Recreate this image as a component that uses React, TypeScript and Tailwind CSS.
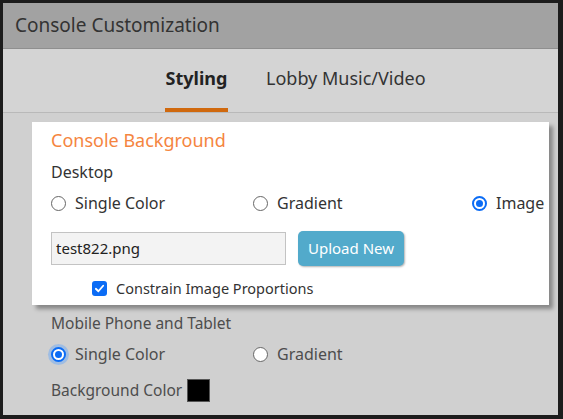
import React from 'react';

const font = { fontFamily: '"Segoe UI", "Noto Sans", Lato, sans-serif' };

function Radio({ checked, halo }: { checked?: boolean; halo?: boolean }) {
  if (checked) {
    return (
      <span
        className={`flex h-[15px] w-[15px] items-center justify-center rounded-full border-2 border-[#0b6cf5] bg-white ${halo ? 'ring-[3px] ring-[#7fb0f0]/60' : ''}`}
      >
        <span className="h-[7px] w-[7px] rounded-full bg-[#0b6cf5]" />
      </span>
    );
  }
  return <span className="h-[15px] w-[15px] rounded-full border border-[#666] bg-white" />;
}

function Option({ label, checked, halo, className = '' }: { label: string; checked?: boolean; halo?: boolean; className?: string }) {
  return (
    <div className={`flex items-center gap-[9px] ${className}`}>
      <Radio checked={checked} halo={halo} />
      <span>{label}</span>
    </div>
  );
}

export default function App() {
  return (
    <div
      className="flex h-[419px] w-[563px] flex-col bg-[#1c1c1c] pb-[4px] pl-[3px] pr-[5px] pt-[3px]"
      style={font}
    >
      <div className="flex h-full flex-col bg-[#d0d0d0]">
        {/* Header */}
        <div className="flex h-[46px] items-center border-b border-[#8f8f8f] bg-[#a2a2a2] pl-[12px] text-[19px] text-[#333]">
          Console Customization
        </div>

        {/* Tabs */}
        <div className="flex h-[64px] items-end border-b border-[#b9b9b9] bg-[#d4d4d4] pl-[162px]">
          <div className="flex flex-col items-center">
            <span className="pb-[16px] text-[18px] font-bold text-[#222]">Styling</span>
            <span className="h-[4px] w-[63px] bg-[#d0690e]" />
          </div>
          <div className="ml-[38px] flex flex-col">
            <span className="pb-[20px] text-[18px] text-[#333]">Lobby Music/Video</span>
          </div>
        </div>

        {/* Content */}
        <div className="flex flex-1 flex-col">
          <div className="ml-[29px] mt-[9px] h-[183px] w-[517px] bg-white pl-[19px] pt-[6px] shadow-[4px_4px_4px_rgba(0,0,0,0.35)]">
            <div className="h-[24px] text-[18px] leading-[24px] text-[#f5853f]">Console Background</div>
            <div className="mt-[9px] h-[22px] text-[16px] leading-[22px] text-[#333]">Desktop</div>
            <div className="mt-[9px] flex h-[22px] items-center text-[16px] text-[#333]">
              <Option label="Single Color" className="w-[202px]" />
              <Option label="Gradient" className="w-[219px]" />
              <Option label="Image" checked />
            </div>
            <div className="mt-[17px] flex items-center">
              <div className="flex h-[33px] w-[235px] items-center border border-[#c3c3c3] bg-[#f3f3f3] pl-[4px] text-[15px] text-[#222]">
                test822.png
              </div>
              <button className="ml-[12px] flex h-[35px] w-[106px] items-center justify-center rounded-[5px] bg-[#52aacb] text-[15px] text-white shadow-[1px_1px_2px_rgba(0,0,0,0.3)]">
                Upload New
              </button>
            </div>
            <div className="ml-[41px] mt-[12px] flex items-center gap-[9px] text-[14.5px] text-[#333]">
              <span className="flex h-[15px] w-[15px] items-center justify-center rounded-[3px] bg-[#0b6cf5]">
                <svg width="11" height="11" viewBox="0 0 12 12">
                  <path d="M2 6.3 L4.8 9 L10 3" fill="none" stroke="white" strokeWidth="2" strokeLinecap="round" strokeLinejoin="round" />
                </svg>
              </span>
              <span>Constrain Image Proportions</span>
            </div>
          </div>

          <div className="ml-[48px] mt-[8px] text-[#4d4d4d]">
            <div className="h-[20px] text-[15.5px] leading-[20px]">Mobile Phone and Tablet</div>
            <div className="mt-[11px] flex h-[20px] items-center text-[16px]">
              <Option label="Single Color" checked halo className="w-[202px]" />
              <Option label="Gradient" />
            </div>
            <div className="mt-[15px] flex items-center gap-[5px] text-[15.5px]">
              <span>Background Color</span>
              <span className="h-[23px] w-[23px] border border-[#555] bg-black" />
            </div>
          </div>
        </div>
      </div>
    </div>
  );
}
